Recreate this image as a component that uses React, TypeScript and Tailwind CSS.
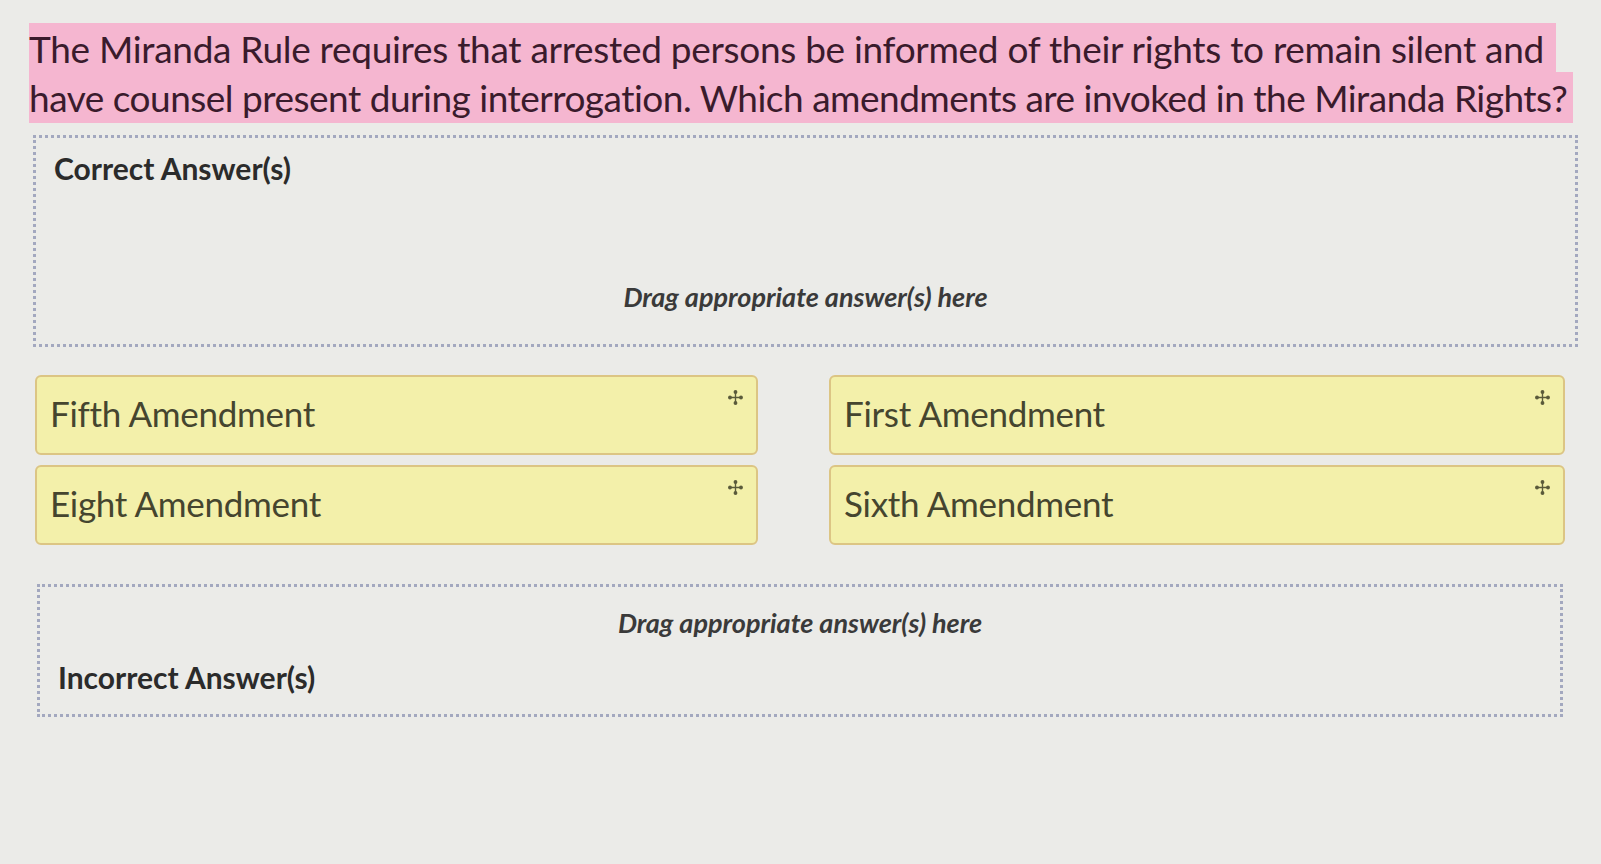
import React from "react";

function MoveIcon() {
  return (
    <svg width="17" height="17" viewBox="0 0 16 16" className="text-[#5a5a3a]">
      <path d="M8 2.5 V13.5 M2.5 8 H13.5" stroke="currentColor" strokeWidth="1.3" />
      <circle cx="8" cy="2.8" r="1.8" fill="currentColor" />
      <circle cx="8" cy="13.2" r="1.8" fill="currentColor" />
      <circle cx="2.8" cy="8" r="1.8" fill="currentColor" />
      <circle cx="13.2" cy="8" r="1.8" fill="currentColor" />
    </svg>
  );
}

function Card({ label }: { label: string }) {
  return (
    <div className="relative h-[80px] rounded-[6px] border-2 border-[#dcc584] bg-[#f3f0aa] flex items-center pl-[13px] pb-[4px]">
      <span className="text-[35px] text-[#45452f] leading-none tracking-[-0.3px]">{label}</span>
      <div className="absolute right-[12px] top-[12px]">
        <MoveIcon />
      </div>
    </div>
  );
}

export default function App() {
  return (
    <div
      className="w-[1601px] h-[864px] bg-[#ebebe8] pl-[29px] pr-[23px] pt-[24px] overflow-hidden"
      style={{ fontFamily: "Lato, 'Noto Sans', sans-serif" }}
    >
      <h1 className="text-[37px] leading-[49px] text-[#3a1b2c] font-normal tracking-[-0.3px] whitespace-nowrap">
        <span className="bg-[#f5b6d0] box-decoration-clone pr-[12px] py-[3px]">
          The Miranda Rule requires that arrested persons be informed of their rights to remain silent and
        </span>
        <br />
        <span className="bg-[#f5b6d0] box-decoration-clone pr-[6px] py-[3px] tracking-[-0.5px]">
          have counsel present during interrogation. Which amendments are invoked in the Miranda Rights?
        </span>
      </h1>

      <div className="mt-[13px] ml-[4px] h-[212px] border-[3px] border-dotted border-[#a3a8bf] flex flex-col px-[18px] pt-[10px]">
        <div className="text-[30px] leading-[40px] font-bold text-[#2b2b2b]">Correct Answer(s)</div>
        <div className="mt-[91px] text-center text-[27px] leading-[36px] italic font-bold text-[#3a3a3a]">
          Drag appropriate answer(s) here
        </div>
      </div>

      <div className="mt-[28px] ml-[6px] mr-[13px] grid grid-cols-[723px_1fr] gap-x-[71px] gap-y-[10px]">
        <Card label="Fifth Amendment" />
        <Card label="First Amendment" />
        <Card label="Eight Amendment" />
        <Card label="Sixth Amendment" />
      </div>

      <div className="mt-[39px] ml-[8px] mr-[15px] h-[133px] border-[3px] border-dotted border-[#a3a8bf] flex flex-col px-[18px] pt-[18px]">
        <div className="text-center text-[27px] leading-[36px] italic font-bold text-[#3a3a3a]">
          Drag appropriate answer(s) here
        </div>
        <div className="mt-[16px] text-[30px] leading-[40px] font-bold text-[#2b2b2b]">Incorrect Answer(s)</div>
      </div>
    </div>
  );
}
